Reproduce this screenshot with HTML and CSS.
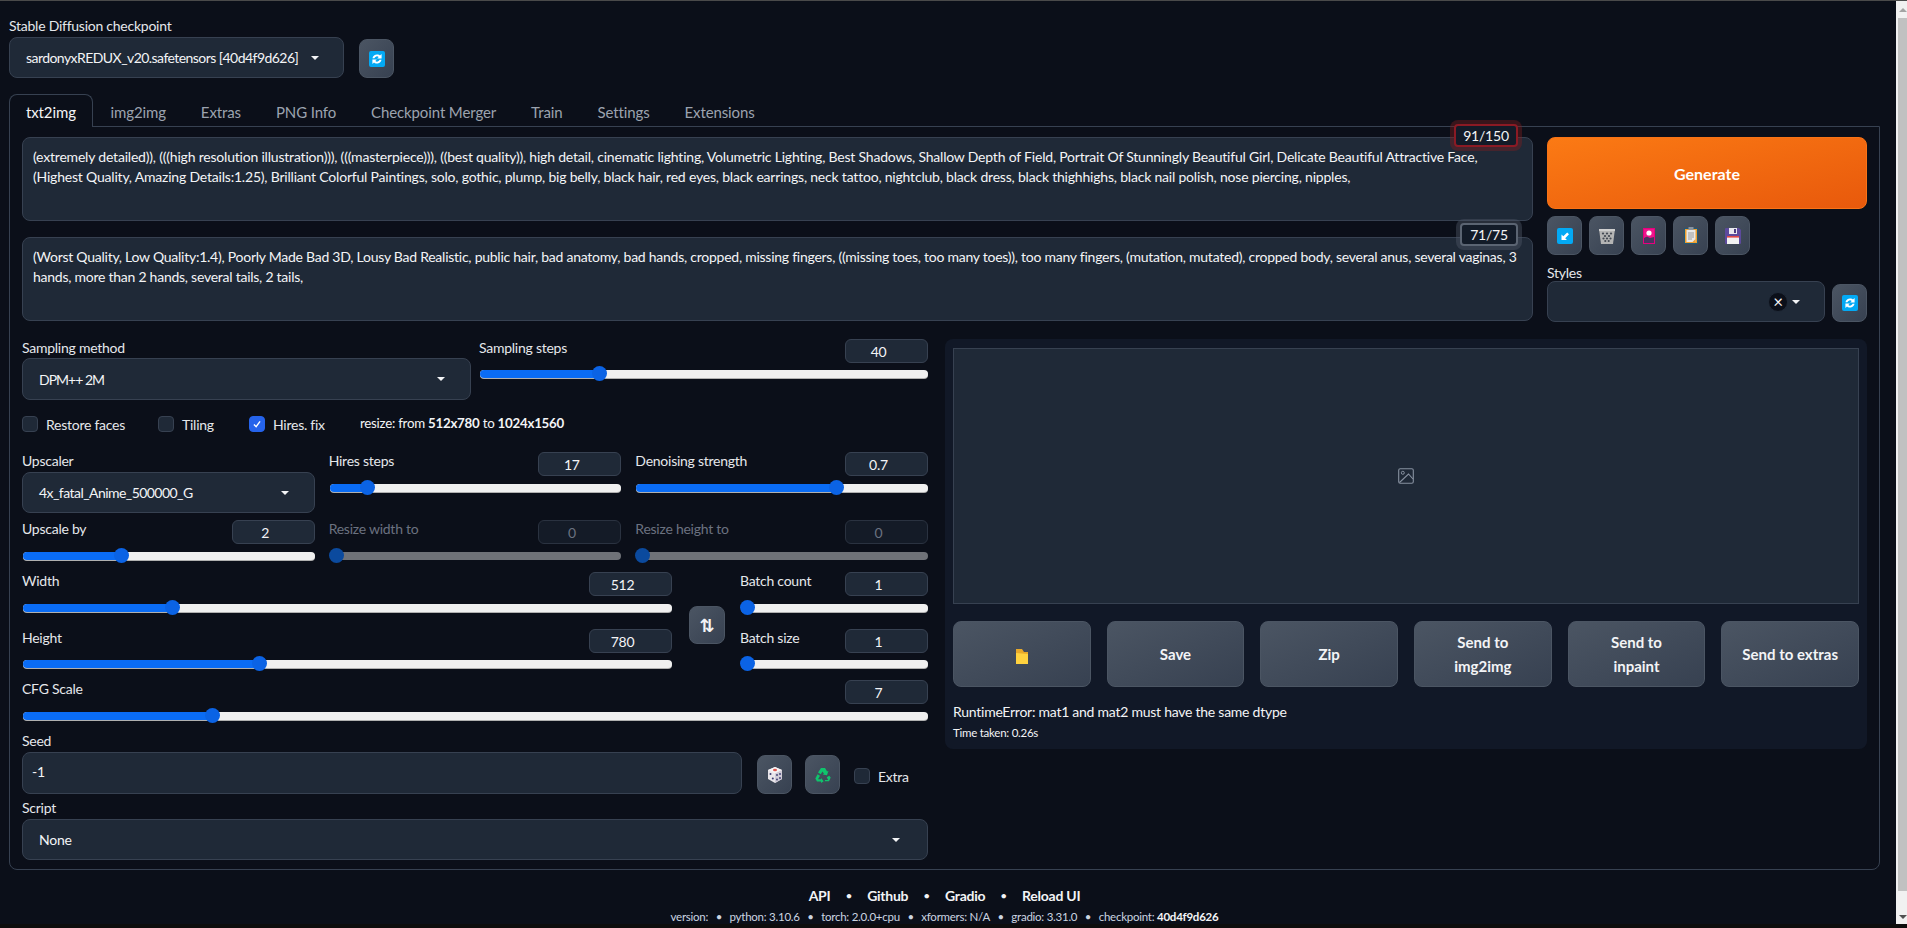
FILE: index.html
```html
<!DOCTYPE html>
<html lang="en">
<head>
<meta charset="utf-8">
<title>Stable Diffusion</title>
<link rel="stylesheet" href="styles.css">
</head>
<body>
<div class="topline"></div>
<div class="viewport">
  <div class="page">
    <section class="checkpoint">
      <div class="field-label">Stable Diffusion checkpoint</div>
      <div class="checkpoint-row">
        <div class="select select-checkpoint"><span class="narrow">sardonyxREDUX_v20.safetensors [40d4f9d626]</span><i class="caret"></i></div>
        <button class="tool">
          <svg class="ico" viewBox="0 0 16 16"><rect width="16" height="16" rx="2" fill="#03a9f4"/><path d="M3.5 7.2A4.6 4.6 0 0 1 11 4.6L12.6 3v4.4H8.2l1.5-1.5a2.8 2.8 0 0 0-4.3 1.3zM12.5 8.8A4.6 4.6 0 0 1 5 11.4L3.4 13V8.6h4.4l-1.5 1.5a2.8 2.8 0 0 0 4.3-1.3z" fill="#fff"/></svg>
        </button>
      </div>
    </section>

    <nav class="tabs">
      <span class="tab active">txt2img</span>
      <span class="tab">img2img</span>
      <span class="tab">Extras</span>
      <span class="tab">PNG Info</span>
      <span class="tab">Checkpoint Merger</span>
      <span class="tab">Train</span>
      <span class="tab">Settings</span>
      <span class="tab">Extensions</span>
    </nav>

    <main class="panel">
      <div class="prompt-row">
        <div class="prompts">
          <div class="prompt prompt-positive">(extremely detailed)), (((high resolution illustration))), (((masterpiece))), ((best quality)), high detail, cinematic lighting, Volumetric Lighting, Best Shadows, Shallow Depth of Field, Portrait Of Stunningly Beautiful Girl, Delicate Beautiful Attractive Face, (Highest Quality, Amazing Details:1.25), Brilliant Colorful Paintings, solo, gothic, plump, big belly, black hair, red eyes, black earrings, neck tattoo, nightclub, black dress, black thighhighs, black nail polish, nose piercing, nipples,
            <span class="counter counter-over">91/150</span>
          </div>
          <div class="prompt">(Worst Quality, Low Quality:1.4), Poorly Made Bad 3D, Lousy Bad Realistic, public hair, bad anatomy, bad hands, cropped, missing fingers, ((missing toes, too many toes)), too many fingers, (mutation, mutated), cropped body, several anus, several vaginas, 3 hands, more than 2 hands, several tails, 2 tails,
            <span class="counter counter-ok">71/75</span>
          </div>
        </div>
        <aside class="actions">
          <button class="generate">Generate</button>
          <div class="tool-row">
            <button class="tool">
              <svg class="ico" viewBox="0 0 16 16"><rect width="16" height="16" rx="2" fill="#03a9f4"/><path d="M12.5 5.2 10.7 3.4 6.8 7.3 5 5.5V11h5.5L8.7 9.2z" fill="#fff" transform="translate(-.5 1)"/></svg>
            </button>
            <button class="tool">
              <svg class="ico" viewBox="0 0 16 16"><path d="M0 1h16l-2 15H2z" fill="#b4b4b4"/><path d="M0 1h16v2H0z" fill="#cfcfcf"/><g fill="#454a54"><ellipse cx="4" cy="5.500" rx="1.200" ry="1"/><ellipse cx="8" cy="5.500" rx="1.200" ry="1"/><ellipse cx="12" cy="5.500" rx="1.200" ry="1"/><ellipse cx="6" cy="8" rx="1.200" ry="1"/><ellipse cx="10" cy="8" rx="1.200" ry="1"/><ellipse cx="4.500" cy="10.500" rx="1.100" ry="1"/><ellipse cx="8" cy="10.500" rx="1.200" ry="1"/><ellipse cx="11.500" cy="10.500" rx="1.100" ry="1"/><ellipse cx="6.300" cy="13" rx="1.100" ry="1"/><ellipse cx="9.700" cy="13" rx="1.100" ry="1"/></g></svg>
            </button>
            <button class="tool">
              <svg class="ico ico-narrow" viewBox="0 0 12 16"><rect width="12" height="16" fill="#e6007e"/><rect x="1" y="1" width="10" height="14" fill="#f0148c"/><path d="M1 15V10l3-1.500 3 1.500 4-1v6z" fill="#4a3560"/><circle cx="6" cy="5" r="2.600" fill="#fff"/></svg>
            </button>
            <button class="tool">
              <svg class="ico ico-clip" viewBox="0 0 14 17"><rect y="1" width="14" height="16" rx="1" fill="#1f5a7a"/><rect x="1" y="2" width="12" height="14" fill="#f0a030"/><rect x="2.500" y="3" width="9" height="12" fill="#e8e8e8"/><path d="M4 6h6M4 8h6M4 10h6M4 12h4" stroke="#9a9a9a"/><rect x="4.500" width="5" height="3" fill="#8a94a0"/><path d="M11.500 15v-3l-3 3z" fill="#f0a030"/></svg>
            </button>
            <button class="tool">
              <svg class="ico" viewBox="0 0 16 16"><path d="M0 1a1 1 0 0 1 1-1h13l2 2v13a1 1 0 0 1-1 1H1a1 1 0 0 1-1-1z" fill="#5c4a9c"/><rect x="4" width="8" height="6" fill="#e8e8ee"/><rect x="9" y="1" width="2" height="4" fill="#4a3d80"/><rect x="2" y="8" width="12" height="8" fill="#f2f2f2"/><rect x="2" y="8" width="12" height="1.600" fill="#e04848"/></svg>
            </button>
          </div>
          <div class="styles-label">Styles</div>
          <div class="styles-row">
            <div class="select select-styles">
              <span class="clear">&times;</span><i class="caret"></i>
            </div>
            <button class="tool tool-small">
              <svg class="ico" viewBox="0 0 16 16"><rect width="16" height="16" rx="2" fill="#03a9f4"/><path d="M3.5 7.2A4.6 4.6 0 0 1 11 4.6L12.6 3v4.4H8.2l1.5-1.5a2.8 2.8 0 0 0-4.3 1.3zM12.5 8.8A4.6 4.6 0 0 1 5 11.4L3.4 13V8.6h4.4l-1.5 1.5a2.8 2.8 0 0 0 4.3-1.3z" fill="#fff"/></svg>
            </button>
          </div>
        </aside>
      </div>

      <div class="workspace">
        <div class="settings">
          <div class="row row-two">
            <div class="group">
              <div class="field-label">Sampling method</div>
              <div class="select select-block"><span class="narrower">DPM++ 2M</span><i class="caret"></i></div>
            </div>
            <div class="slider">
              <div class="slider-head"><span class="field-label">Sampling steps</span><span class="number">40</span></div>
              <div class="track track-tight"><div class="fill" style="width:26.7%"></div></div>
            </div>
          </div>

          <div class="checks">
            <label class="check check-restore"><i class="box"></i>Restore faces</label>
            <label class="check check-tiling"><i class="box"></i>Tiling</label>
            <label class="check check-hires"><i class="box box-on"><svg viewBox="0 0 16 16"><path d="M4.500 8.500 7 11l4.500-6" fill="none" stroke="#fff" stroke-width="1.600"/></svg></i>Hires. fix</label>
            <span class="resize-note">resize: from <b>512x780</b> to <b>1024x1560</b></span>
          </div>

          <div class="row row-three row-upscaler">
            <div class="group">
              <div class="field-label">Upscaler</div>
              <div class="select select-block select-upscaler"><span class="narrow">4x_fatal_Anime_500000_G</span><i class="caret"></i></div>
            </div>
            <div class="slider">
              <div class="slider-head"><span class="field-label">Hires steps</span><span class="number">17</span></div>
              <div class="track"><div class="fill" style="width:13%"></div></div>
            </div>
            <div class="slider">
              <div class="slider-head"><span class="field-label">Denoising strength</span><span class="number">0.7</span></div>
              <div class="track"><div class="fill" style="width:68.7%"></div></div>
            </div>
          </div>

          <div class="row row-three row-upscale">
            <div class="slider">
              <div class="slider-head"><span class="field-label">Upscale by</span><span class="number">2</span></div>
              <div class="track"><div class="fill" style="width:34%"></div></div>
            </div>
            <div class="slider disabled">
              <div class="slider-head"><span class="field-label">Resize width to</span><span class="number">0</span></div>
              <div class="track"><div class="fill" style="width:2.4%"></div></div>
            </div>
            <div class="slider disabled">
              <div class="slider-head"><span class="field-label">Resize height to</span><span class="number">0</span></div>
              <div class="track"><div class="fill" style="width:2.4%"></div></div>
            </div>
          </div>

          <div class="dimensions">
            <div class="dim-stack">
              <div class="slider">
                <div class="slider-head"><span class="field-label">Width</span><span class="number">512</span></div>
                <div class="track"><div class="fill" style="width:23.1%"></div></div>
              </div>
              <div class="slider">
                <div class="slider-head"><span class="field-label">Height</span><span class="number">780</span></div>
                <div class="track track-tight"><div class="fill" style="width:36.5%"></div></div>
              </div>
            </div>
            <button class="tool swap">⇅</button>
            <div class="batch-stack">
              <div class="slider">
                <div class="slider-head"><span class="field-label">Batch count</span><span class="number">1</span></div>
                <div class="track"><div class="fill" style="width:3.7%"></div></div>
              </div>
              <div class="slider">
                <div class="slider-head"><span class="field-label">Batch size</span><span class="number">1</span></div>
                <div class="track track-tight"><div class="fill" style="width:3.7%"></div></div>
              </div>
            </div>
          </div>

          <div class="slider slider-cfg">
            <div class="slider-head"><span class="field-label">CFG Scale</span><span class="number">7</span></div>
            <div class="track"><div class="fill" style="width:21%"></div></div>
          </div>

          <div class="seed">
            <div class="field-label">Seed</div>
            <div class="seed-row">
              <div class="seed-input">-1</div>
              <button class="tool">
                <svg class="ico" viewBox="0 0 16 16"><path d="M8 0l7 3v9l-7 4-7-4V3z" fill="#e9e6ea"/><path d="M8 0l7 3-7 3.500L1 3z" fill="#f5f3f5"/><path d="M8 6.500V16l7-4V3z" fill="#cfcbd6"/><ellipse cx="8" cy="3" rx="2" ry="1.200" fill="#e0574f"/><circle cx="3.500" cy="7" r="1" fill="#3b3a70"/><circle cx="5.800" cy="11.500" r="1" fill="#3b3a70"/><circle cx="10" cy="8" r=".9" fill="#3b3a70"/><circle cx="13" cy="7" r=".9" fill="#3b3a70"/><circle cx="10" cy="12.500" r=".9" fill="#3b3a70"/><circle cx="13" cy="11" r=".9" fill="#3b3a70"/></svg>
              </button>
              <button class="tool tool-recycle">
                <svg class="ico" viewBox="0 0 16 16" fill="#0fc46c"><path d="M6 1h4l2.200 3.600 1.300-.8L12 8.200 7.600 7.500l1.300-.8L7.500 4.400 5.800 7.200 3 5.500z"/><path d="M2.600 7.200 5 8.700l-2 3.500H6V11l2.700 3.300L6 16v-1.500H2L.3 11.500z"/><path d="M15.700 10.500 14 14.300H9.800V16l.1-.2V11.800l0 1.100h3.300l-1.500-2.700 2.500-1.500z"/></svg>
              </button>
              <label class="check check-extra"><i class="box"></i>Extra</label>
            </div>
          </div>

          <div class="script">
            <div class="field-label">Script</div>
            <div class="select select-script"><span>None</span><i class="caret"></i></div>
          </div>
        </div>

        <div class="output">
          <div class="gallery">
            <svg class="gallery-icon" viewBox="0 0 16 16"><rect x=".7" y=".7" width="14.600" height="14.600" rx="1.500" fill="none" stroke="#8791a0" stroke-width="1.100"/><circle cx="4.800" cy="4.800" r="1.500" fill="none" stroke="#8791a0"/><path d="M1.500 14.500 10.500 6l4.500 5" fill="none" stroke="#8791a0" stroke-width="1.100"/></svg>
          </div>
          <div class="out-buttons">
            <button class="out-btn"><svg class="folder" viewBox="0 0 14 17"><path d="M1 1h6l2 3h4v12H1z" fill="#e8a92a"/><path d="M1 5l12 1v10H1z" fill="#ffd23f"/></svg></button>
            <button class="out-btn">Save</button>
            <button class="out-btn">Zip</button>
            <button class="out-btn">Send to<br>img2img</button>
            <button class="out-btn">Send to<br>inpaint</button>
            <button class="out-btn">Send to extras</button>
          </div>
          <div class="error">RuntimeError: mat1 and mat2 must have the same dtype</div>
          <div class="time">Time taken: 0.26s</div>
        </div>
      </div>
    </main>

    <footer class="footer">
      <div class="links"><b>API</b><span class="dot">•</span><b>Github</b><span class="dot">•</span><b>Gradio</b><span class="dot">•</span><b>Reload UI</b></div>
      <div class="versions"><span>version:</span><span class="dot-sm">•</span><span>python: 3.10.6</span><span class="dot-sm">•</span><span>torch: 2.0.0+cpu</span><span class="dot-sm">•</span><span>xformers: N/A</span><span class="dot-sm">•</span><span>gradio: 3.31.0</span><span class="dot-sm">•</span><span>checkpoint: <b>40d4f9d626</b></span></div>
    </footer>
  </div>
  <div class="scrollbar">
    <i class="arrow-up"></i>
    <div class="thumb"></div>
    <i class="arrow-down"></i>
  </div>
</div>
<div class="bottomline"></div>
</body>
</html>
```

FILE: styles.css
```css
* { box-sizing: border-box; }
html, body { margin: 0; height: 928px; overflow: hidden; }
body {
  background: #0b0f19;
  color: #f3f4f6;
  font-family: "Lato", "Liberation Sans", sans-serif;
  font-size: 14px;
  letter-spacing: -.25px;
  display: flex;
  flex-direction: column;
}
.topline { height: 1px; background: #4a4a4a; flex: none; }
.bottomline { height: 4px; background: #0d0d0d; flex: none; }
.viewport { flex: 1; display: flex; min-height: 0; }
.page { flex: 1; min-width: 0; padding: 0 16px 0 9px; }

.scrollbar { width: 11px; background: #f1f1f1; display: flex; flex-direction: column; align-items: center; padding-left: 2px; }
.arrow-up, .arrow-down { width: 0; height: 0; border-left: 4px solid transparent; border-right: 4px solid transparent; flex: none; }
.arrow-up { border-bottom: 4px solid #a3a3a3; margin-top: 7px; margin-bottom: 6px; }
.arrow-down { border-top: 4px solid #505050; margin-top: 24px; margin-bottom: 5px; }
.thumb { flex: 1; width: 100%; background: #c1c1c1; }

button { font-family: inherit; color: inherit; cursor: pointer; }

.field-label { font-size: 14px; line-height: 18px; color: #e5e7eb; }
.narrow { letter-spacing: -.55px; }
.narrower { letter-spacing: -1px; }

.checkpoint { padding-top: 16px; }
.checkpoint .field-label { height: 20px; }
.checkpoint-row { display: flex; align-items: flex-end; gap: 15px; height: 41px; }

.select {
  background: #1f2937;
  border: 1px solid #374151;
  border-radius: 8px;
  display: flex;
  align-items: center;
  justify-content: space-between;
  color: #f3f4f6;
  white-space: nowrap;
}
.select-checkpoint { width: 335px; height: 41px; padding: 0 24px 0 16px; }
.select-block { height: 42px; padding: 0 25px 0 16px; margin-top: 1px; }
.select-upscaler { height: 41px; margin-top: 2px; }
.select-script { height: 41px; padding: 0 27px 0 16px; }
.select-styles { flex: 1; height: 41px; justify-content: flex-end; padding-right: 24px; gap: 4px; }
.caret { width: 0; height: 0; border-left: 4px solid transparent; border-right: 4px solid transparent; border-top: 4px solid #f3f4f6; }
.clear {
  width: 20px; height: 20px; border-radius: 50%;
  background: #0b0f19; border: 1px solid #1f2937;
  display: flex; align-items: center; justify-content: center;
  font-size: 17px; line-height: 1; color: #f3f4f6;
}

.tool {
  width: 35px; height: 39px; padding: 0;
  background: linear-gradient(to bottom right, #4b5563, #374151);
  border: 1px solid #4b5563;
  border-radius: 8px;
  display: flex; align-items: center; justify-content: center;
  flex: none;
}
.ico { width: 16px; height: 16px; display: block; }
.ico-narrow { width: 12px; }
.ico-clip { width: 14px; height: 17px; }

.tabs { display: flex; margin-top: 16px; height: 33px; position: relative; z-index: 1; }
.tab {
  padding: 0 16.500px;
  height: 33px;
  line-height: 35px;
  font-size: 15px;
  letter-spacing: -.12px;
  color: #9ca3af;
  border: 1px solid transparent;
  border-bottom: none;
  border-radius: 8px 8px 0 0;
}
.tab.active { color: #f3f4f6; border-color: #374151; background: #0b0f19; width: 84px; padding: 0 16px; }

.panel {
  border: 1px solid #374151;
  border-radius: 0 0 8px 8px;
  padding: 10px 12px 10px 12px;
  height: 744px;
  margin-top: -1px;
}

.prompt-row { display: flex; gap: 14px; }
.prompts { width: 1511px; flex: none; display: flex; flex-direction: column; gap: 16px; }
.prompt {
  position: relative;
  height: 84px;
  background: #1f2937;
  border: 1px solid #374151;
  border-radius: 8px;
  padding: 9px 10px;
  font-size: 14px;
  line-height: 20px;
}
.prompt-positive { letter-spacing: -.2px; }
.counter {
  position: absolute;
  right: 14px;
  background: #131b28;
  border-radius: 4px;
  text-align: center;
  font-size: 14px;
  line-height: 19px;
  height: 23px;
}
.counter-over { top: -14px; width: 64px; border: 2px solid #8b1a24; box-shadow: 0 0 0 4px rgba(127, 29, 29, .4); }
.counter-ok { top: -15px; width: 58px; border: 2px solid #5b6472; box-shadow: 0 0 0 4px rgba(75, 85, 99, .45); }

.actions { width: 320px; flex: none; }
.generate {
  display: block; width: 100%; height: 72px;
  background: linear-gradient(to bottom right, #fb7a14, #e8590c);
  border: 1px solid #f97316;
  border-radius: 8px;
  font-size: 16px; font-weight: 700; color: #fff;
}
.tool-row { display: flex; gap: 7px; margin-top: 7px; }
.styles-label { margin-top: 9px; height: 17px; line-height: 17px; font-size: 14px; color: #e5e7eb; }
.styles-row { display: flex; align-items: flex-end; gap: 7px; height: 41px; }
.tool-small { width: 35px; height: 38px; }

.workspace { display: flex; gap: 17px; margin-top: 17px; align-items: flex-start; }
.settings { width: 906px; flex: none; }
.row { display: grid; }
.row-two { grid-template-columns: 449px 449px; gap: 8px; height: 61px; }
.row-three { grid-template-columns: repeat(3, 1fr); gap: 14px; }
.row-upscaler { margin-top: 20px; height: 61px; }
.row-upscale { margin-top: 7px; height: 46px; }

.slider { height: 46px; }
.slider-head { display: flex; justify-content: space-between; align-items: flex-start; height: 24px; }
.number {
  width: 83px; height: 24px;
  background: #1f2937;
  border: 1px solid #374151;
  border-radius: 6px;
  font-size: 14px; line-height: 24px;
  text-align: center;
  padding-right: 16px;
}
.track {
  height: 8px; margin: 8px 0 0 1px;
  background: #f0f0f0;
  border-radius: 4px;
  box-shadow: 0 1px 0 #b0b0b0;
}
.track-tight { margin-top: 7px; }
.fill { height: 100%; background: #0a6cf5; border-radius: 4px; position: relative; }
.fill::after {
  content: "";
  position: absolute;
  right: -7px; top: -4px;
  width: 15px; height: 15px;
  border-radius: 50%;
  background: #0b63e5;
}
.disabled .field-label { color: #6b7280; }
.disabled .number { color: #6b7280; background: #141b27; border-color: #2a3240; }
.disabled .track { background: #6f7278; box-shadow: none; }
.disabled .fill { background: #0b4a9e; }
.disabled .fill::after { background: #0b4a9e; }

.checks { display: flex; align-items: center; height: 16px; margin-top: 16px; }
.check { display: flex; align-items: center; gap: 8px; color: #e5e7eb; font-size: 14px; }
.box {
  width: 16px; height: 16px; flex: none;
  background: #1f2937;
  border: 1px solid #374151;
  border-radius: 4px;
  display: block;
}
.box-on { background: #2563eb; border-color: #2563eb; }
.box-on svg { display: block; width: 14px; height: 14px; }
.check-restore { width: 136px; }
.check-tiling { width: 91px; }
.check-hires { width: 111px; }
.resize-note { font-size: 13.300px; color: #f3f4f6; position: relative; top: -1px; }

.dimensions { display: flex; margin-top: 6px; height: 104px; }
.dim-stack { width: 650px; flex: none; display: flex; flex-direction: column; gap: 11px; }
.batch-stack { width: 188px; flex: none; display: flex; flex-direction: column; gap: 11px; }
.swap { margin: 34px 15px 0 17px; width: 36px; height: 38px; font-family: "DejaVu Sans", sans-serif; font-size: 18px; font-weight: 700; color: #f3f4f6; }
.slider-cfg { margin-top: 4px; }

.seed { margin-top: 5px; }
.seed .field-label { height: 21px; line-height: 20px; }
.seed-row { display: flex; align-items: flex-end; height: 42px; }
.seed-input {
  width: 720px; height: 42px;
  background: #1f2937;
  border: 1px solid #374151;
  border-radius: 8px;
  padding: 0 9px;
  line-height: 38px;
  margin-right: 15px;
}
.tool-recycle { margin-left: 13px; }
.check-extra { margin-left: 14px; align-self: center; margin-top: 6px; }

.script { margin-top: 5px; }
.script .field-label { height: 20px; }

.output {
  width: 922px; height: 410px; flex: none;
  background: #111827;
  border-radius: 8px;
  padding: 9px 8px;
}
.gallery {
  height: 256px;
  background: #1f2937;
  border: 1px solid #374151;
  display: flex; align-items: center; justify-content: center;
}
.gallery-icon { width: 16px; height: 16px; }
.out-buttons { display: grid; grid-template-columns: repeat(6, 1fr); gap: 16px; margin-top: 17px; }
.out-btn {
  height: 66px; padding: 0;
  background: linear-gradient(to bottom right, #4b5563, #374151);
  border: 1px solid #4b5563;
  border-radius: 8px;
  font-size: 15px; font-weight: 700; line-height: 24px; color: #f3f4f6;
}
.folder { width: 14px; height: 17px; vertical-align: middle; }
.error { margin-top: 15px; font-size: 14px; line-height: 20px; color: #f3f4f6; }
.time { font-size: 11.500px; line-height: 16px; margin-top: 3px; color: #f3f4f6; }

.footer { text-align: center; padding-top: 17px; width: 1871px; }
.links { font-size: 14px; line-height: 17px; height: 17px; color: #f3f4f6; display: flex; justify-content: center; }
.dot { margin: 0 15px; font-size: 12px; }
.versions { margin-top: 5px; font-size: 11.500px; line-height: 15px; color: #cbd5e1; display: flex; justify-content: center; gap: 0; }
.dot-sm { margin: 0 7.500px; }
.versions b { color: #f3f4f6; }
```
